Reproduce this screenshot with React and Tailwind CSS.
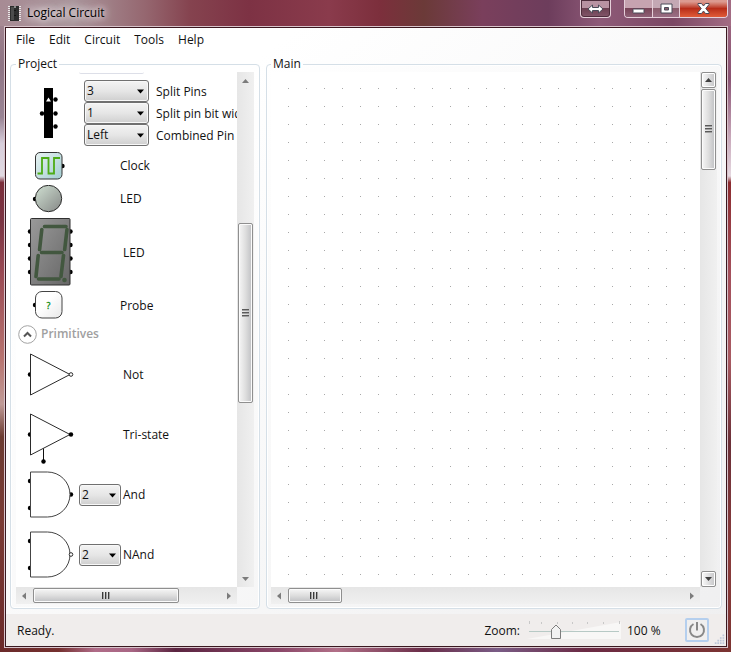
import React, { useState } from 'react';

const menuItems = ['File', 'Edit', 'Circuit', 'Tools', 'Help'];

function Arrow({ dir, dark }) {
  const points = {
    up: '0,6 3.5,2 7,6',
    down: '0,2 7,2 3.5,6',
    left: '5,0.5 1,4 5,7.5',
    right: '2,0.5 6,4 2,7.5',
  };
  return (
    <svg width="8" height="8" viewBox="0 0 8 8" aria-hidden="true">
      <polygon points={points[dir]} fill={dark ? '#404040' : '#7c7c7c'} />
    </svg>
  );
}

function VScroll({ thumbClass, spaceBefore, spaceAfter, raised }) {
  const button = raised
    ? 'flex h-4 w-[15px] shrink-0 items-center justify-center rounded-[2px] border border-[#8f8f8f] bg-linear-to-r from-[#fafafa] to-[#c6c6c8] shadow-[inset_0_0_0_1px_#fff]'
    : 'flex h-[17px] w-[15px] shrink-0 items-center justify-center';
  return (
    <div className="flex w-[17px] shrink-0 flex-col items-center bg-linear-to-r from-[#e6e6e6] to-[#f0f0f0]">
      <button type="button" aria-label="Scroll up" className={button}>
        <Arrow dir="up" dark={raised} />
      </button>
      <div className={spaceBefore} />
      <div className={`flex w-[15px] flex-col items-center justify-center rounded-[2px] border border-[#8f8f8f] bg-linear-to-r from-[#f6f6f6] via-[#dedede] to-[#bfc0c3] shadow-[inset_0_0_0_1px_#fbfbfb] ${thumbClass}`}>
        <svg width="7" height="9" viewBox="0 0 7 9" aria-hidden="true">
          <path d="M0 .5h7M0 3.5h7M0 6.5h7" stroke="#5a5a5a" />
          <path d="M0 1.5h7M0 4.5h7M0 7.5h7" stroke="#a2a2a2" />
        </svg>
      </div>
      <div className={spaceAfter} />
      <button type="button" aria-label="Scroll down" className={button}>
        <Arrow dir="down" dark={raised} />
      </button>
    </div>
  );
}

function HScroll({ thumbClass, spaceAfter }) {
  return (
    <div className="flex h-[17px] min-w-0 flex-1 items-center bg-linear-to-b from-[#e6e6e6] to-[#f0f0f0]">
      <button type="button" aria-label="Scroll left" className="flex h-[15px] w-[17px] shrink-0 items-center justify-center">
        <Arrow dir="left" />
      </button>
      <div className={`flex h-[15px] items-center justify-center rounded-[2px] border border-[#8f8f8f] bg-linear-to-b from-[#f6f6f6] via-[#dedede] to-[#bfc0c3] shadow-[inset_0_0_0_1px_#fbfbfb] ${thumbClass}`}>
        <svg width="9" height="7" viewBox="0 0 9 7" aria-hidden="true">
          <path d="M.5 0v7M3.5 0v7M6.5 0v7" stroke="#3a3a3a" />
          <path d="M1.5 0v7M4.5 0v7M7.5 0v7" stroke="#a2a2a2" />
        </svg>
      </div>
      <div className={spaceAfter} />
      <button type="button" aria-label="Scroll right" className="flex h-[15px] w-[17px] shrink-0 items-center justify-center">
        <Arrow dir="right" />
      </button>
    </div>
  );
}

function Combo({ id, label, options, className }) {
  return (
    <div className={`relative shrink-0 ${className}`}>
      <select
        id={id}
        aria-label={label}
        className="block h-[22px] w-full appearance-none rounded-[3px] border border-[#707070] bg-linear-to-b from-[#f3f3f3] from-0% via-[#e6e6e6] via-50% to-[#cfcfcf] pl-[2px] text-[12px] text-[#111] shadow-[inset_0_0_0_1px_#f8f8f8]"
      >
        {options.map((o) => (
          <option key={o}>{o}</option>
        ))}
      </select>
      <svg className="pointer-events-none absolute top-[9px] right-[5px]" width="7" height="5" viewBox="0 0 7 5" aria-hidden="true">
        <polygon points="0,0.5 7,0.5 3.5,4.5" fill="#000" />
      </svg>
    </div>
  );
}

function SplitterIcon() {
  return (
    <svg className="shrink-0" width="52" height="66" viewBox="0 0 52 66" aria-hidden="true">
      <rect x="20" y="8" width="9" height="50" />
      <polygon points="22,21.5 27,21.5 24.5,17.5" fill="#fff" />
      <circle cx="18" cy="33.500" r="2.200" />
      <circle cx="31.500" cy="19.500" r="2.200" />
      <circle cx="31.500" cy="33.500" r="2.200" />
      <circle cx="31.500" cy="46.500" r="2.200" />
    </svg>
  );
}

function ClockIcon() {
  return (
    <svg className="shrink-0" width="52" height="28" viewBox="0 0 52 28" aria-hidden="true">
      <defs>
        <linearGradient id="clockFill" x1="0" y1="0" x2="1" y2="1">
          <stop offset="0" stopColor="#e9f3f2" />
          <stop offset="1" stopColor="#a3cdd2" />
        </linearGradient>
      </defs>
      <circle cx="38.500" cy="14" r="2.200" />
      <rect x="11.500" y="0.500" width="26.500" height="26.500" rx="4.500" fill="url(#clockFill)" stroke="#333" />
      <path d="M13.500 21.500h4.500v-15.500h6.500v15.500h5.500v-15.500h6" fill="none" stroke="#4dac16" strokeWidth="1.800" />
    </svg>
  );
}

function LedIcon() {
  return (
    <svg className="shrink-0" width="52" height="28" viewBox="0 0 52 28" aria-hidden="true">
      <defs>
        <linearGradient id="ledFill" x1="0" y1="0" x2="1" y2="1">
          <stop offset="0.150" stopColor="#c5d3c7" />
          <stop offset="0.900" stopColor="#8d918e" />
        </linearGradient>
      </defs>
      <circle cx="11" cy="14" r="2.200" />
      <circle cx="24.500" cy="13.500" r="13.200" fill="url(#ledFill)" stroke="#2c2c2c" />
    </svg>
  );
}

function SevenSegmentIcon() {
  return (
    <svg className="shrink-0" width="52" height="68" viewBox="0 0 52 68" aria-hidden="true">
      <defs>
        <linearGradient id="segFill" x1="0" y1="0" x2="1" y2="1">
          <stop offset="0" stopColor="#9a9a9a" />
          <stop offset="1" stopColor="#666" />
        </linearGradient>
      </defs>
      {[13.5, 27, 40.5, 54].map((y) => (
        <g key={y}>
          <circle cx="6" cy={y} r="2.200" />
          <circle cx="46.500" cy={y} r="2.200" />
        </g>
      ))}
      <rect x="6.500" y="0.500" width="39.500" height="66.500" rx="1" fill="url(#segFill)" stroke="#303030" />
      <g stroke="#42573f" strokeWidth="3.600" strokeLinecap="round">
        <path d="M20.500 8.500H42M17.500 34.500H38M14.500 61H35" />
        <path d="M17.800 11.500L15.600 31.500M43 11.500L40.700 31.500M14.200 37.500L12 58.500M39.500 37.500L37 58.500" />
      </g>
      <circle cx="40.500" cy="62" r="2.300" fill="#42573f" />
    </svg>
  );
}

function ProbeIcon() {
  return (
    <svg className="shrink-0" width="52" height="28" viewBox="0 0 52 28" aria-hidden="true">
      <defs>
        <linearGradient id="probeFill" x1="0" y1="0" x2="1" y2="1">
          <stop offset="0.400" stopColor="#fff" />
          <stop offset="1" stopColor="#e8e8e8" />
        </linearGradient>
      </defs>
      <circle cx="11" cy="14" r="2.200" />
      <rect x="11.500" y="0.500" width="26.500" height="26.500" rx="6.500" fill="url(#probeFill)" stroke="#444" />
      <text x="24.500" y="17.500" textAnchor="middle" fontSize="9" fill="#0b8a0b" stroke="#0b8a0b" strokeWidth="0.300">?</text>
    </svg>
  );
}

function TriangleIcon({ inverted, control }) {
  return (
    <svg className="shrink-0" width="52" height="60" viewBox="0 0 52 60" aria-hidden="true">
      <circle cx="6" cy="29.500" r="2.200" />
      <path d="M6.500 9v41L46 29.500z" fill="#fff" stroke="#2b2b2b" />
      {control && (
        <>
          <path d="M19.500 43.500v13" stroke="#111" />
          <circle cx="19.500" cy="56.500" r="2.200" />
        </>
      )}
      {inverted ? (
        <circle cx="47" cy="29.500" r="1.800" fill="#fff" stroke="#2b2b2b" />
      ) : (
        <circle cx="47" cy="29.500" r="2.200" />
      )}
    </svg>
  );
}

function AndIcon({ inverted }) {
  return (
    <svg className="shrink-0" width="52" height="60" viewBox="0 0 52 60" aria-hidden="true">
      <circle cx="6" cy="16" r="2.200" />
      <circle cx="6" cy="43" r="2.200" />
      {!inverted && <circle cx="47" cy="29.500" r="2.200" />}
      <path d="M6.500 7H23.500A22.500 22.500 0 0 1 23.500 52H6.500z" fill="#fff" stroke="#444" />
      {inverted && <circle cx="47" cy="29.500" r="1.800" fill="#fff" stroke="#2b2b2b" />}
    </svg>
  );
}

function Palette() {
  return (
    <div className="flex min-w-0 flex-1 flex-col overflow-hidden bg-white whitespace-nowrap">
      <div className="ml-[63px] h-[2px] w-[65px] shrink-0 rounded-b-[2px] border-b border-[#dddfe8]" />
      <div className="mt-[6px] flex shrink-0 pb-[3px] pl-2">
        <SplitterIcon />
        <div className="ml-2 flex flex-col">
          {[
            ['split-pins', 'Split Pins', ['3', '2', '4']],
            ['split-width', 'Split pin bit width', ['1', '2', '4']],
            ['combined-pin', 'Combined Pin', ['Left', 'Right']],
          ].map(([id, label, options]) => (
            <div key={id} className="flex items-center">
              <Combo id={id} label={label} options={options} className="w-[65px]" />
              <label htmlFor={id} className="ml-[7px] pt-[2px]">{label}</label>
            </div>
          ))}
        </div>
      </div>
      <div className="flex h-[33px] shrink-0 items-center pl-2"><ClockIcon /><span className="ml-11">Clock</span></div>
      <div className="flex h-[33px] shrink-0 items-center pl-2"><LedIcon /><span className="ml-11">LED</span></div>
      <div className="flex h-[74px] shrink-0 items-center pl-2"><SevenSegmentIcon /><span className="ml-[47px] pt-[2px]">LED</span></div>
      <div className="flex h-8 shrink-0 items-center pl-2"><ProbeIcon /><span className="ml-11 pt-[2px]">Probe</span></div>
      <button type="button" className="flex h-6 shrink-0 items-center gap-1 pt-[2px] pl-[2px] text-left font-semibold text-[#a0a0a0]">
        <svg width="19" height="19" viewBox="0 0 19 19" aria-hidden="true">
          <circle cx="9.500" cy="9.500" r="8.800" fill="#fff" stroke="#a3a3a3" />
          <path d="M6 11.500L9.500 8L13 11.500" fill="none" stroke="#555" strokeWidth="2" />
        </svg>
        Primitives
      </button>
      <div className="flex h-[60px] shrink-0 items-center pl-2"><TriangleIcon inverted /><span className="ml-[47px]">Not</span></div>
      <div className="flex h-[60px] shrink-0 items-center pl-2"><TriangleIcon control /><span className="ml-[47px]">Tri-state</span></div>
      <div className="flex h-[60px] shrink-0 items-center pl-2">
        <AndIcon />
        <Combo id="and-inputs" label="And" options={['2', '3', '4']} className="ml-[3px] w-[42px]" />
        <label htmlFor="and-inputs" className="ml-[2px]">And</label>
      </div>
      <div className="flex h-[60px] shrink-0 items-center pl-2">
        <AndIcon inverted />
        <Combo id="nand-inputs" label="NAnd" options={['2', '3', '4']} className="ml-[3px] w-[42px]" />
        <label htmlFor="nand-inputs" className="ml-[2px]">NAnd</label>
      </div>
    </div>
  );
}

function TitleBar() {
  return (
    <header className="flex h-[26px] shrink-0 items-start justify-between">
      <div className="flex h-[26px] items-center gap-[6px] pl-1">
        <svg width="13" height="15" viewBox="0 0 13 15" aria-hidden="true">
          <path d="M1 0v15M12 0v15" stroke="#e8e8e8" strokeWidth="2" strokeDasharray="1 1" />
          <rect x="2" y="0" width="9" height="15" fill="#2c2c2c" />
          <rect x="3" y="1" width="3" height="13" fill="#4c4c4c" />
          <path d="M6 0h2v2h-2z" fill="#8a8a8a" />
          <path d="M6 4h2v1h-2zM6 9h2v1h-2z" fill="#151515" />
        </svg>
        <h1 className="text-[12px] text-black [text-shadow:0_0_8px_#fff,0_0_14px_#e8dce0,0_0_6px_#e8dce0]">Logical Circuit</h1>
      </div>
      <div className="flex h-[18px] items-stretch">
        <button type="button" aria-label="Span displays" className="mr-[13px] flex w-[31px] items-center justify-center rounded-b-[4px] border border-t-0 border-[#e5cfd9] bg-linear-to-b from-[#b892a2] from-45% via-[#6c4052] via-50% to-[#83566a] shadow-[inset_0_0_0_1px_#4e2d3c]">
          <svg width="17" height="10" viewBox="0 0 17 10" aria-hidden="true">
            <path d="M1 5L5.500 1v2.500h6V1L16 5l-4.500 4V6.500h-6V9z" fill="#fff" stroke="#4a4a58" />
          </svg>
        </button>
        <div className="flex overflow-hidden rounded-b-[4px] border border-t-0 border-[#e5cfd9]">
          <button type="button" aria-label="Minimize" className="flex w-7 items-center justify-center border-r border-[#e5cfd9] bg-linear-to-b from-[#c6a3b0] from-45% via-[#784458] via-50% to-[#8e6076]">
            <svg width="13" height="10" viewBox="0 0 13 10" aria-hidden="true">
              <rect x="1" y="5" width="11" height="4" rx="0.500" fill="#fff" stroke="#4a4a58" />
            </svg>
          </button>
          <button type="button" aria-label="Maximize" className="flex w-[27px] items-center justify-center border-r border-[#e5cfd9] bg-linear-to-b from-[#c4a8b4] from-45% via-[#8a5c6c] via-50% to-[#9a6e84]">
            <svg width="13" height="12" viewBox="0 0 13 12" aria-hidden="true">
              <path d="M1 1h11v9H1zM4.500 4.500v2.500h4V4.500z" fill="#fff" fillRule="evenodd" stroke="#4a4a58" />
            </svg>
          </button>
          <button type="button" aria-label="Close" className="flex w-[47px] items-center justify-center bg-linear-to-b from-[#dc9a90] from-10% via-[#b82c18] via-50% to-[#e05b38]">
            <svg width="13" height="11" viewBox="0 0 13 11" aria-hidden="true">
              <path d="M1 .5h3.500L6.500 3l2-2.500H12v1L8.800 5.500L12 9.500v1H8.500L6.500 8l-2 2.500H1v-1L4.200 5.500L1 1.500z" fill="#fff" stroke="#4a4a58" />
            </svg>
          </button>
        </div>
      </div>
    </header>
  );
}

function StatusBar() {
  const [zoom, setZoom] = useState(1);
  const thumb = 13 + zoom * 15;
  return (
    <footer className="flex h-8 shrink-0 items-center bg-[#f0edec] pl-[11px]">
      <span className="flex-1 pt-[2px]">Ready.</span>
      <label htmlFor="zoom" className="mr-[7px] pt-[2px]">Zoom:</label>
      <div className="relative mr-[6px] h-[22px] w-[94px]">
        <svg width="94" height="22" viewBox="0 0 94 22" aria-hidden="true">
          <polygon points="0,20 94,3 94,20" fill="#f8f7f6" />
          <path d="M2.500 2v3M14.500 3v2M30.500 3v2M45.500 3v2M60.500 3v2M76.500 3v2M92.500 2v3" stroke="#c8c8c8" />
          <path d="M2 12.500h90" stroke="#b7c9c5" />
          <path d={`M${thumb - 3.5} 19.500v-9l4.500-4.500l4.500 4.500v9z`} fill="#f2f2f2" stroke="#7d7d7d" />
        </svg>
        <input
          id="zoom"
          type="range"
          min="0"
          max="5"
          value={zoom}
          onChange={(e) => setZoom(Number(e.target.value))}
          className="absolute inset-0 m-0 h-full w-full opacity-0"
        />
      </div>
      <span className="w-[58px] pt-[2px] whitespace-nowrap">100 %</span>
      <button type="button" aria-label="Power" className="flex size-6 items-center justify-center rounded-[2px] border-2 border-[#b5cfee] bg-[#f0efef]">
        <svg width="18" height="18" viewBox="0 0 18 18" className="shrink-0" aria-hidden="true">
          <path d="M5.500 3A7 7 0 1 0 12.500 3" fill="none" stroke="#888" strokeWidth="2" />
          <path d="M9 1v8.500" stroke="#888" strokeWidth="2" />
        </svg>
      </button>
      <svg className="mr-px ml-[5px] self-end pb-[2px]" width="11" height="14" viewBox="0 0 11 14" aria-hidden="true">
        <path d="M0 12h2v2h-2zM3 12h2v2h-2zM6 12h2v2h-2zM9 12h2v2h-2zM3 9h2v2h-2zM6 9h2v2h-2zM9 9h2v2h-2zM6 6h2v2h-2zM9 6h2v2h-2zM9 3h2v2h-2z" fill="#bcc6d8" />
      </svg>
    </footer>
  );
}

export default function App() {
  return (
    <div
      className="flex h-screen w-full flex-col overflow-hidden bg-[#7a3442] pr-[3px] pb-1 pl-1 font-['Open_Sans','Noto_Sans',sans-serif] text-[12px] leading-4 text-[#111]
      [background-image:linear-gradient(90deg,#a78b94_0%,#a9959b_10%,#95666f_20%,#85434f_26%,#7d3244_34%,#8a3b4c_45%,#7c2f3c_52%,#6b3a38_58%,#7a3f5c_66%,#6d3d5c_75%,#8e5a78_82%,#7b4763_92%,#a36c84_100%),linear-gradient(90deg,#6b2a2a_0%,#75302f_8%,#b06c88_13%,#a86684_18%,#5b2440_24%,#8a4668_38%,#b27088_46%,#6a2d48_58%,#7a5c86_68%,#6b2a44_80%,#7c3432_100%),linear-gradient(180deg,#a78b94_0%,#8f7484_10%,#9a8494_18%,#d8cedb_22%,#e2dae2_27%,#7b2d3a_28%,#7a3442_34%,#9a4a54_42%,#b87470_55%,#c09a96_62%,#6b3a30_67%,#7a3a34_80%,#6b2a2a_100%),linear-gradient(180deg,#a36c84_0%,#8a5474_12%,#c8a8ba_21%,#e5d8e0_27%,#8c2c30_28%,#a4505c_42%,#a85a62_55%,#6b3038_68%,#8a3c3c_85%,#7c3432_100%)]
      [background-position:0_0,0_100%,0_0,100%_0] [background-repeat:no-repeat]
      [background-size:100%_26px,100%_5px,5px_100%,5px_100%]"
    >
      <TitleBar />
      <div className="flex min-h-0 flex-1 flex-col border border-[#d8c4cb]">
        <div className="flex min-h-0 flex-1 flex-col border border-[#3a1820] bg-linear-to-br from-white from-20% to-[#efeff0]">
          <nav className="mb-1 flex h-6 shrink-0 items-center gap-[14px] pl-[10px]">
            {menuItems.map((m) => (
              <button key={m} type="button">{m}</button>
            ))}
          </nav>
          <main className="flex min-h-0 flex-1 gap-[6px] px-1 pb-[5px]">
            <fieldset className="flex w-[250px] min-w-0 shrink-0 flex-col rounded-[4px] border border-[#d5dfe7] px-[5px] pb-1 shadow-[inset_0_0_0_1px_#fff]">
              <legend className="px-[2px]">Project</legend>
              <div className="flex min-h-0 flex-1">
                <Palette />
                <VScroll spaceBefore="flex-[135]" thumbClass="flex-[178]" spaceAfter="flex-[168]" />
              </div>
              <div className="flex shrink-0 pr-[17px]">
                <HScroll thumbClass="flex-[145]" spaceAfter="flex-[41]" />
              </div>
            </fieldset>
            <fieldset className="flex min-w-0 flex-1 flex-col rounded-[4px] border border-[#d5dfe7] px-1 pb-1 shadow-[inset_0_0_0_1px_#fff]">
              <legend className="px-[2px]">Main</legend>
              <div className="flex min-h-0 flex-1">
                <div className="min-w-0 flex-1 bg-white">
                  <svg className="block h-full w-full" aria-label="Circuit diagram grid">
                    <defs>
                      <pattern id="grid" width="18" height="18" patternUnits="userSpaceOnUse">
                        <rect x="17" y="16" width="1" height="1" fill="#a8a8a8" />
                      </pattern>
                    </defs>
                    <rect width="100%" height="100%" fill="url(#grid)" />
                  </svg>
                </div>
                <VScroll raised spaceBefore="h-px" thumbClass="flex-[79]" spaceAfter="flex-[404]" />
              </div>
              <div className="flex shrink-0 pr-[17px]">
                <HScroll thumbClass="flex-[52]" spaceAfter="flex-[343]" />
              </div>
            </fieldset>
          </main>
          <StatusBar />
        </div>
      </div>
    </div>
  );
}
